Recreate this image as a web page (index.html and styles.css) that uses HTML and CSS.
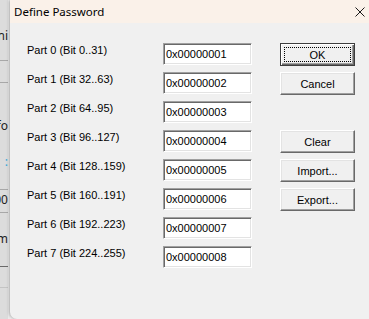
FILE: index.html
```html
<!DOCTYPE html>
<html>
<head>
<meta charset="utf-8">
<link rel="stylesheet" href="styles.css">
</head>
<body>
<div class="bg">
  <div class="bgrow r1"><span class="tx">Defini</span></div>
  <div class="bgrow r2"></div>
  <div class="bgrow r3"><span class="tx">Info</span><span class="tx cy">:</span></div>
  <div class="bgrow r4"><span class="tx">0x00</span></div>
  <div class="bgrow r5"><span class="tx">Custom</span></div>
  <div class="bgrow r6"></div>
</div>
<div class="dialog">
  <div class="title">
    <span class="title-text">Define Password</span>
    <svg class="close" width="10" height="10" viewBox="0 0 10 10"><path d="M0.5 0.5L9.5 9.5M9.5 0.5L0.5 9.5" stroke="#1a1a1a" stroke-width="1"/></svg>
  </div>
  <div class="content">
    <div class="fields">
      <label class="lbl">Part 0 (Bit 0..31)</label><input class="hex" value="0x00000001" readonly>
      <label class="lbl">Part 1 (Bit 32..63)</label><input class="hex" value="0x00000002" readonly>
      <label class="lbl">Part 2 (Bit 64..95)</label><input class="hex" value="0x00000003" readonly>
      <label class="lbl">Part 3 (Bit 96..127)</label><input class="hex" value="0x00000004" readonly>
      <label class="lbl">Part 4 (Bit 128..159)</label><input class="hex" value="0x00000005" readonly>
      <label class="lbl">Part 5 (Bit 160..191)</label><input class="hex" value="0x00000006" readonly>
      <label class="lbl">Part 6 (Bit 192..223)</label><input class="hex" value="0x00000007" readonly>
      <label class="lbl">Part 7 (Bit 224..255)</label><input class="hex" value="0x00000008" readonly>
    </div>
    <div class="buttons">
      <button class="btn default"><span class="focus">OK</span></button>
      <button class="btn">Cancel</button>
      <button class="btn spaced">Clear</button>
      <button class="btn">Import...</button>
      <button class="btn">Export...</button>
    </div>
  </div>
</div>
</body>
</html>
```
FILE: styles.css
```css
html, body {
  margin: 0;
  padding: 0;
}
body {
  width: 369px;
  height: 319px;
  overflow: hidden;
  display: flex;
  background: #f0f0f0;
  font-family: "Liberation Sans", Arial, sans-serif;
  font-size: 11px;
  color: #000;
}
.bg {
  width: 8px;
  flex: none;
  background: #dcdcdc;
  border-right: 2px solid #ececec;
  display: flex;
  flex-direction: column;
  font-family: "Noto Sans", sans-serif;
  font-size: 12px;
  color: #222;
}
.bgrow {
  display: flex;
  flex-direction: column;
  align-items: flex-end;
  overflow: hidden;
  flex: none;
  border-bottom: 1px solid #a8a8a8;
}
.tx {
  white-space: nowrap;
  line-height: 14px;
}
.cy { color: #39a9d9; }
.r1 { height: 60px; padding-top: 0; justify-content: flex-start; }
.r1 .tx { margin-top: 29px; }
.r2 { height: 21px; }
.r3 { height: 106px; }
.r3 .tx:first-child { margin-top: 36px; }
.r3 .cy { margin-top: 22px; }
.r4 { height: 22px; }
.r4 .tx { margin-top: 3px; }
.r5 { height: 53px; border-bottom-color: #6a6a6a; }
.r5 .tx { margin-top: 19px; }
.r6 { height: 20px; border-bottom-color: #c4c4c4; }

.dialog {
  flex: 1;
  display: flex;
  flex-direction: column;
  background: #f0f0f0;
  border-bottom-left-radius: 7px;
  box-shadow: -1px 0 3px rgba(0, 0, 0, 0.28);
  position: relative;
}
.title {
  height: 23px;
  flex: none;
  background: #faf1e9;
  display: flex;
  align-items: center;
  justify-content: space-between;
  padding: 0 4px 0 4px;
}
.title-text {
  font-family: "Noto Sans", sans-serif;
  font-size: 11.5px;
  color: #000;
}
.close {
  margin-right: 0;
}
.content {
  display: flex;
  align-items: flex-start;
  padding: 20px 0 0 17px;
}
.fields {
  display: grid;
  grid-template-columns: 136px 89px;
  grid-auto-rows: 22px;
  row-gap: 7px;
}
.lbl {
  line-height: 13px;
  padding-top: 1px;
  white-space: nowrap;
}
.hex {
  box-sizing: border-box;
  width: 89px;
  height: 22px;
  margin: 0;
  padding: 0 0 0 2px;
  font-family: "Liberation Sans", Arial, sans-serif;
  font-size: 11px;
  color: #000;
  background: #fff;
  border: 1px solid;
  border-color: #a0a0a0 #fff #fff #a0a0a0;
  box-shadow: inset 1px 1px #696969, inset -1px -1px #e3e3e3;
  outline: none;
}
.buttons {
  display: flex;
  flex-direction: column;
  gap: 6px;
  margin-left: 28px;
}
.btn {
  box-sizing: border-box;
  width: 75px;
  height: 23px;
  margin: 0;
  padding: 0;
  font-family: "Liberation Sans", Arial, sans-serif;
  font-size: 11px;
  color: #000;
  background: #f0f0f0;
  border: 1px solid;
  border-color: #fff #696969 #696969 #fff;
  box-shadow: inset -1px -1px #a0a0a0, inset 1px 1px #e3e3e3;
  display: flex;
  align-items: center;
  justify-content: center;
}
.btn.default {
  border: 1px solid #3c3c3c;
  box-shadow: inset 1px 1px #fff, inset -1px -1px #696969, inset -2px -2px #a0a0a0;
  padding: 3px;
}
.focus {
  flex: 1;
  align-self: stretch;
  display: flex;
  align-items: center;
  justify-content: center;
  border: 1px dotted #000;
}
.spaced {
  margin-top: 29px;
}
```
